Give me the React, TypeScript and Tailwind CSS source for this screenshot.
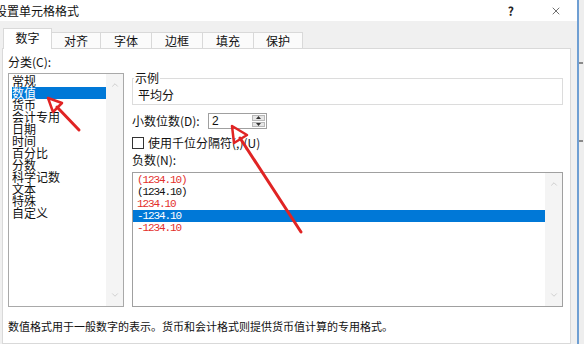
import React from 'react';
import { ChevronDown, ChevronUp, X } from 'lucide-react';

const tabs = [
  { label: '数字', width: 'w-[49px]' },
  { label: '对齐', width: 'w-[49px]' },
  { label: '字体', width: 'w-[51px]' },
  { label: '边框', width: 'w-[51px]' },
  { label: '填充', width: 'w-[51px]' },
  { label: '保护', width: 'w-[49px]' },
];

const categories = [
  '常规',
  '数值',
  '货币',
  '会计专用',
  '日期',
  '时间',
  '百分比',
  '分数',
  '科学记数',
  '文本',
  '特殊',
  '自定义',
];

const negatives = [
  { text: '(1234.10)', color: 'text-[#e3302c]' },
  { text: '(1234.10)', color: 'text-[#111]' },
  { text: '1234.10', color: 'text-[#e3302c]' },
  { text: '-1234.10', color: 'text-white', selected: true },
  { text: '-1234.10', color: 'text-[#e3302c]' },
];

function ScrollBar() {
  return (
    <div className="flex w-[17px] flex-col items-center justify-between bg-[#f4f4f4] py-[6px]">
      <ChevronUp size={10} strokeWidth={1.6} className="text-[#bdbdbd]" />
      <ChevronDown size={10} strokeWidth={1.6} className="text-[#bdbdbd]" />
    </div>
  );
}

export default function App() {
  return (
    <div
      className="relative flex h-[344px] w-[584px] overflow-hidden bg-[#f0f0f0] text-[12px] text-[#111]"
      style={{ fontFamily: '"Noto Sans CJK SC", "Noto Sans", sans-serif' }}
    >
      <div className="flex w-[577px] flex-col">
        {/* title bar */}
        <div className="flex h-[21px] items-center bg-white">
          <span className="-ml-[5px] leading-[14px]">设置单元格格式</span>
          <span className="ml-auto text-[12px] font-bold leading-[12px] text-[#222]">?</span>
          <X size={12} strokeWidth={1.3} className="ml-[36px] mr-[15px] text-[#222]" />
        </div>

        {/* tabs */}
        <div className="flex h-[27px] items-end pl-[3px]">
          {tabs.map((tab, i) =>
            i === 0 ? (
              <div
                key={tab.label}
                className={`relative z-10 -mb-px flex h-[21px] ${tab.width} items-center justify-center border-x border-t border-[#d9d9d9] bg-white pb-[2px] leading-[12px]`}
              >
                {tab.label}
              </div>
            ) : (
              <div
                key={tab.label}
                className={`flex h-[16px] ${tab.width} items-center justify-center border-r border-t border-[#d9d9d9] bg-[#fbfbfb] leading-[12px]`}
              >
                {tab.label}
              </div>
            ),
          )}
        </div>

        {/* panel */}
        <div className="ml-[2px] flex w-[569px] flex-1 flex-col border border-[#d9d9d9] bg-white pl-[5px]">
          <div className="flex gap-[8px]">
            {/* categories */}
            <div className="flex w-[116px] flex-col pt-[7px]">
              <div className="leading-[12px]">分类(C):</div>
              <div className="mt-[5px] flex h-[234px] border border-[#a9a9a9] bg-white">
                <div className="flex-1 pl-[3px] pt-[1px]">
                  {categories.map((c, i) => (
                    <div
                      key={c}
                      className={`h-[12px] leading-[12px] ${i === 1 ? 'bg-[#0078d7] text-white' : ''}`}
                    >
                      {c}
                    </div>
                  ))}
                </div>
                <ScrollBar />
              </div>
            </div>

            {/* right side */}
            <div className="flex w-[431px] flex-col pt-[23px]">
              <fieldset className="border border-[#dcdcdc] pb-[2px] pl-[5px] pt-[4px]">
                <legend className="-ml-[4px] px-[1px] leading-[12px]">示例</legend>
                <div className="leading-[14px]">平均分</div>
              </fieldset>

              <div className="mt-[8px] flex h-[16px] items-center">
                <span className="w-[76px] leading-[16px]">小数位数(D):</span>
                <div className="flex h-[16px] w-[59px] items-center justify-between border border-[#a0a0a0] bg-white pl-[3px] pr-[1px]">
                  <span className="leading-[12px]" style={{ fontFamily: '"Liberation Sans", sans-serif' }}>
                    2
                  </span>
                  <div className="flex h-[12px] w-[13px] flex-col gap-px">
                    <div className="flex flex-1 items-center justify-center border border-[#b8b8b8] bg-[#e6e6e6]">
                      <svg width="5" height="3" viewBox="0 0 5 3">
                        <path d="M2.5 0 L5 3 L0 3 Z" fill="#333" />
                      </svg>
                    </div>
                    <div className="flex flex-1 items-center justify-center border border-[#b8b8b8] bg-[#e6e6e6]">
                      <svg width="5" height="3" viewBox="0 0 5 3">
                        <path d="M0 0 L5 0 L2.5 3 Z" fill="#333" />
                      </svg>
                    </div>
                  </div>
                </div>
              </div>

              <div className="mt-[8px] flex h-[12px] items-center">
                <div className="h-[12px] w-[12px] border border-[#333] bg-white" />
                <span className="ml-[4px] leading-[12px]">使用千位分隔符(,)(U)</span>
              </div>

              <div className="mt-[5px] leading-[12px]">负数(N):</div>
              <div className="mt-[6px] flex h-[135px] border border-[#a0a0a0] bg-white">
                <div
                  className="flex-1 pt-[1px] text-[11px] tracking-[-1.1px]"
                  style={{ fontFamily: '"Liberation Mono", monospace' }}
                >
                  {negatives.map((n, i) => (
                    <div
                      key={i}
                      className={`h-[12px] px-[4px] leading-[12px] ${n.color} ${n.selected ? 'bg-[#0078d7]' : ''}`}
                    >
                      {n.text}
                    </div>
                  ))}
                </div>
                <ScrollBar />
              </div>
            </div>
          </div>

          <div className="mt-[13px] text-[11px] leading-[12px]">
            数值格式用于一般数字的表示。货币和会计格式则提供货币值计算的专用格式。
          </div>
        </div>
      </div>

      {/* neighbouring window edge */}
      <div className="w-[2px] bg-[#6f9fd3]" />
      <div className="flex w-[5px] flex-col bg-[#eeeeee]">
        <div className="mt-[62px] h-[2px] w-[4px] bg-[#8a8a8a]" />
        <div className="mt-[76px] h-[2px] w-[4px] bg-[#8a8a8a]" />
      </div>

      {/* red annotation arrows */}
      <svg className="pointer-events-none absolute inset-0" width="584" height="344" viewBox="0 0 584 344">
        <g stroke="#e02424" strokeWidth="3" strokeLinecap="round" strokeLinejoin="round" fill="none">
          <line x1="57" y1="107" x2="79" y2="130" />
          <path d="M48 98 L62 103 L53 112 Z" strokeWidth="2.5" />
          <line x1="240" y1="138" x2="301" y2="232" />
          <path d="M232 126 L247 135 L234 143 Z" strokeWidth="2.5" />
        </g>
      </svg>
    </div>
  );
}
